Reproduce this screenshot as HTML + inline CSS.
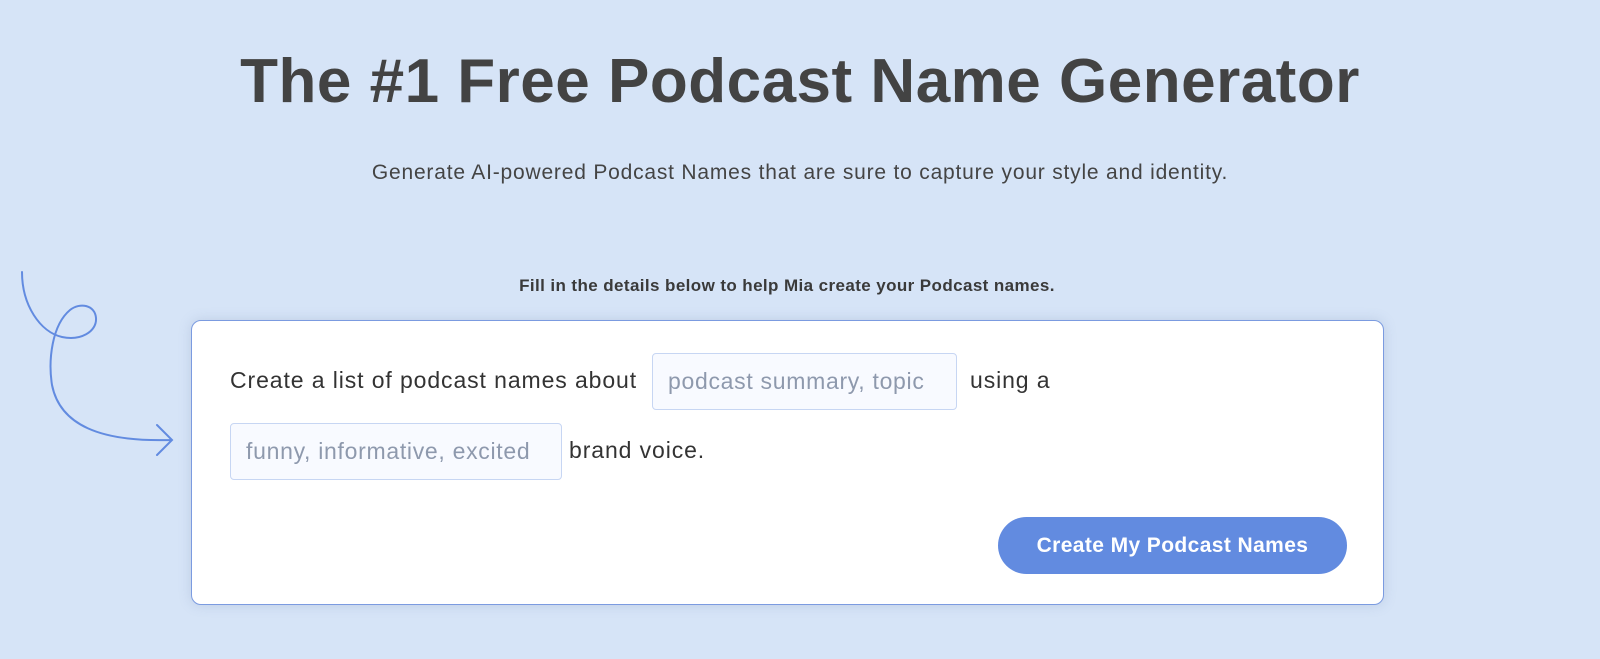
<!DOCTYPE html>
<html><head><style>
body{margin:0;width:1600px;height:659px;background:#d6e4f7;font-family:"Liberation Sans",sans-serif;position:relative;overflow:hidden;color:#3f3f3f}
h1{position:absolute;top:46px;left:0;width:1600px;text-align:center;margin:0;font-size:62px;font-weight:bold;color:#434343;letter-spacing:0.5px}
.sub{position:absolute;top:161px;width:1600px;left:0;text-align:center;font-size:21px;letter-spacing:0.8px;color:#444}
.fill{position:absolute;top:276px;width:1574px;left:0;text-align:center;font-size:17px;letter-spacing:0.4px;font-weight:bold;color:#3a3a3a}
.card{position:absolute;left:191px;top:320px;width:1191px;height:283px;background:#fff;border:1px solid #7b9be0;border-radius:10px;box-shadow:0 0 12px rgba(120,140,180,.25)}
.t{position:absolute;font-size:23px;letter-spacing:0.9px;color:#333}
.in{position:absolute;background:#f8faff;border:1px solid #c7d6f3;border-radius:4px;font-size:23px;letter-spacing:0.7px;color:#8e99ad;box-sizing:border-box;padding-left:15px;line-height:54px;white-space:nowrap;overflow:hidden}
.btn{position:absolute;left:806px;top:196px;width:349px;height:57px;background:#628be0;border-radius:29px;color:#fff;font-size:21px;letter-spacing:0.4px;font-weight:bold;text-align:center;line-height:57px}
</style></head><body>
<h1>The #1 Free Podcast Name Generator</h1>
<div class="sub">Generate AI-powered Podcast Names that are sure to capture your style and identity.</div>
<div class="fill">Fill in the details below to help Mia create your Podcast names.</div>
<svg style="position:absolute;left:0;top:0" width="200" height="480"><path d="M22,272 C22,305 40,332 62,337 C80,341 97,332 96,318 C95,305 80,302 70,310 C52,325 48,360 52,385 C60,425 100,442 170,440 M157,425 L172,440 L157,455" fill="none" stroke="#628be0" stroke-width="2" stroke-linecap="round"/></svg>
<div class="card">
<div class="t" style="left:38px;top:46px">Create a list of podcast names about</div>
<div class="in" style="left:460px;top:32px;width:305px;height:57px">podcast summary, topic</div>
<div class="t" style="left:778px;top:46px">using a</div>
<div class="in" style="left:38px;top:102px;width:332px;height:57px">funny, informative, excited</div>
<div class="t" style="left:377px;top:116px">brand voice.</div>
<div class="btn">Create My Podcast Names</div>
</div>
</body></html>
